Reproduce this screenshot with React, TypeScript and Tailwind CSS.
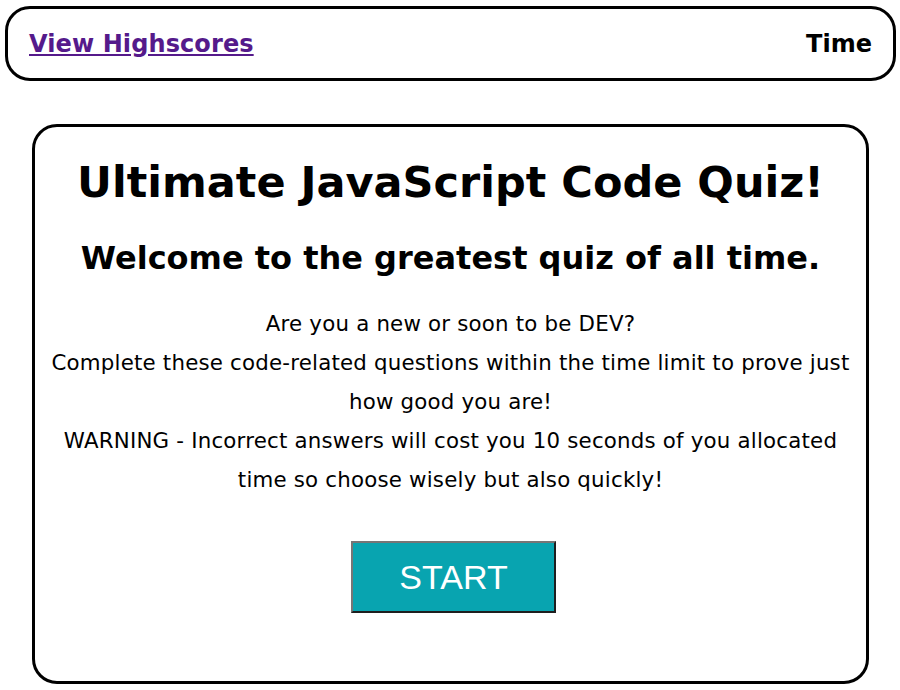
import React from 'react';

const App: React.FC = () => {
  return (
    <div className="min-h-[690px] bg-white pl-[5px] pr-[4px] pt-[6px] text-black font-['DejaVu_Sans',Verdana,sans-serif]">
      <header className="flex h-[75px] items-center justify-between rounded-[25px] border-[3px] border-black pl-[21px] pr-[21px]">
        <a href="#" className="text-[24px] font-bold text-[#551a8b] underline tracking-[0.1px]">
          View Highscores
        </a>
        <span className="text-[24px] font-bold">Time</span>
      </header>

      <main className="mx-[27px] mt-[43px] flex h-[560px] flex-col items-center rounded-[25px] border-[3px] border-black px-2 pt-[25px] text-center">
        <h1 className="text-[43px] font-bold leading-[60px]">Ultimate JavaScript Code Quiz!</h1>
        <h2 className="mt-[26px] text-[32px] font-bold leading-[40px]">Welcome to the greatest quiz of all time.</h2>
        <div className="mt-[26px] text-[21.33px] leading-[39px] tracking-[0.2px]">
          <p>Are you a new or soon to be DEV?</p>
          <p>Complete these code-related questions within the time limit to prove just how good you are!</p>
          <p>WARNING - Incorrect answers will cost you 10 seconds of you allocated time so choose wisely but also quickly!</p>
        </div>
        <button className="ml-[6px] mt-[42px] h-[72px] w-[205px] border-2 border-t-[#767676] border-l-[#767676] border-b-[#1e1e1e] border-r-[#1e1e1e] bg-[#08a4b0] font-['Liberation_Sans',Arial,sans-serif] text-[34px] text-white">
          START
        </button>
      </main>
    </div>
  );
};

export default App;
